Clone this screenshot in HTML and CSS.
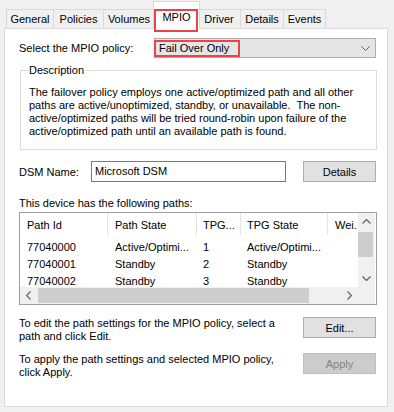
FILE: index.html
```html
<!DOCTYPE html>
<html lang="en">
<head>
    <meta charset="UTF-8">
    <title>MPIO Properties</title>
    <link rel="stylesheet" href="styles.css">
</head>
<body>
    <!-- tab strip -->
    <div class="tabs">
        <div class="tab t-general">General</div>
        <div class="tab t-policies">Policies</div>
        <div class="tab t-volumes">Volumes</div>
        <div class="tab t-mpio active"><span class="mark-tab"></span>MPIO</div>
        <div class="tab t-driver">Driver</div>
        <div class="tab t-details">Details</div>
        <div class="tab t-events">Events</div>
    </div>

    <div class="panel">
        <div class="policy-row">
            <span class="policy-label">Select the MPIO policy:</span>
            <div class="combo">
                <span class="mark">Fail Over Only</span>
                <svg class="combo-arrow" width="9" height="5" viewBox="0 0 9 5">
                    <polyline points="0.5,0.5 4.5,4.5 8.5,0.5" fill="none" stroke="#606060" stroke-width="1"/>
                </svg>
            </div>
        </div>

        <fieldset class="desc">
            <legend>Description</legend>
            <p>The failover policy employs one active/optimized path and all other<br>
            paths are active/unoptimized, standby, or unavailable.&nbsp; The non-<br>
            active/optimized paths will be tried round-robin upon failure of the<br>
            active/optimized path until an available path is found.</p>
        </fieldset>

        <div class="dsm-row">
            <span class="dsm-label">DSM Name:</span>
            <div class="field">Microsoft DSM</div>
            <button class="btn">Details</button>
        </div>

        <div class="paths-label">This device has the following paths:</div>

        <div class="list">
            <div class="list-body">
                <div class="row head">
                    <div class="th">Path Id</div>
                    <div class="th">Path State</div>
                    <div class="th c3">TPG...</div>
                    <div class="th c4">TPG State</div>
                    <div class="th last">Wei.</div>
                </div>
                <div class="row">
                    <div>77040000</div><div>Active/Optimi...</div><div class="c3">1</div><div class="c4">Active/Optimi...</div><div></div>
                </div>
                <div class="row">
                    <div>77040001</div><div>Standby</div><div class="c3">2</div><div class="c4">Standby</div><div></div>
                </div>
                <div class="row">
                    <div>77040002</div><div>Standby</div><div class="c3">3</div><div class="c4">Standby</div><div></div>
                </div>
            </div>
            <div class="vscroll">
                <div class="arrow">
                    <svg width="9" height="5" viewBox="0 0 9 5"><polyline points="0.5,4.5 4.5,0.5 8.5,4.5" fill="none" stroke="#606060" stroke-width="1.2"/></svg>
                </div>
                <div class="vthumb"></div>
                <div class="arrow down">
                    <svg width="9" height="5" viewBox="0 0 9 5"><polyline points="0.5,0.5 4.5,4.5 8.5,0.5" fill="none" stroke="#606060" stroke-width="1.2"/></svg>
                </div>
            </div>
            <div class="hscroll">
                <div class="arrow">
                    <svg width="5" height="9" viewBox="0 0 5 9"><polyline points="4.5,0.5 0.5,4.5 4.5,8.5" fill="none" stroke="#606060" stroke-width="1.2"/></svg>
                </div>
                <div class="hthumb"></div>
                <div class="arrow right">
                    <svg width="5" height="9" viewBox="0 0 5 9"><polyline points="0.5,0.5 4.5,4.5 0.5,8.5" fill="none" stroke="#606060" stroke-width="1.2"/></svg>
                </div>
            </div>
            <div class="corner"></div>
        </div>

        <div class="action-row">
            <p>To edit the path settings for the MPIO policy, select a<br>path and click Edit.</p>
            <button class="btn">Edit...</button>
        </div>

        <div class="action-row apply-row">
            <p>To apply the path settings and selected MPIO policy,<br>click Apply.</p>
            <button class="btn" disabled>Apply</button>
        </div>
    </div>
</body>
</html>
```

FILE: styles.css
```css
body {
    margin: 0;
    background: #f0f0f0;
    font-family: "Liberation Sans", Arial, sans-serif;
    font-size: 11px;
    color: #000;
}

/* tabs */
.tabs {
    display: flex;
    align-items: flex-end;
    height: 28px;
    padding-left: 6px;
}

.tab {
    box-sizing: border-box;
    height: 19px;
    border: 1px solid #d9d9d9;
    border-bottom: none;
    margin-right: -1px;
    padding-top: 3px;
    line-height: 13px;
    text-align: center;
}
.t-general { width: 48px; }
.t-policies { width: 51px; }
.t-volumes { width: 52px; }
.t-driver { width: 44px; }
.t-details { width: 44px; }
.t-events { width: 43px; }

.tab.active {
    position: relative;
    z-index: 2;
    width: 47px;
    height: 28px;
    margin: 0 -3px -1px -1px;
    padding-top: 9px;
    background: #fff;
}

.mark-tab {
    position: absolute;
    left: 0;
    top: 7px;
    width: 44px;
    height: 23px;
    box-sizing: border-box;
    border: 2px solid #e9434b;
}

/* main page */
.panel {
    box-sizing: border-box;
    width: 384px;
    height: 379px;
    margin-left: 4px;
    padding: 9px 10px 0 14px;
    background: #fff;
    border: 1px solid #d9d9d9;
}

.policy-row {
    display: flex;
    align-items: center;
    height: 20px;
}
.policy-label { width: 135px; }

.combo {
    display: flex;
    align-items: center;
    box-sizing: border-box;
    width: 222px;
    height: 20px;
    border: 1px solid #adadad;
    background: #e5e5e5;
}
.mark {
    box-sizing: border-box;
    width: 86px;
    height: 17px;
    margin-left: -1px;
    padding-left: 3px;
    line-height: 13px;
    border: 2px solid #e9434b;
}
.combo-arrow {
    margin-left: auto;
    margin-right: 5px;
}

.desc {
    box-sizing: border-box;
    height: 86px;
    margin: 6px 0 0 1px;
    padding: 0 7px;
    border: 1px solid #dcdcdc;
}
.desc legend {
    padding: 0 1px;
    line-height: 13px;
}
.desc p {
    margin: 9px 0 0;
    padding-left: 1px;
    line-height: 13px;
    white-space: nowrap;
}

.dsm-row {
    display: flex;
    align-items: center;
    height: 21px;
    margin-top: 11px;
}
.dsm-label { width: 72px; }
.field {
    box-sizing: border-box;
    width: 195px;
    height: 21px;
    padding-left: 3px;
    line-height: 19px;
    border: 1px solid #7a7a7a;
}

.btn {
    box-sizing: border-box;
    width: 73px;
    height: 21px;
    margin-left: auto;
    margin-right: 1px;
    padding: 0;
    font: inherit;
    color: #000;
    background: #e1e1e1;
    border: 1px solid #adadad;
}
.btn:disabled {
    color: #838383;
    background: #cccccc;
    border-color: #bfbfbf;
}

.paths-label {
    margin-top: 15px;
    line-height: 13px;
}

/* list view */
.list {
    display: grid;
    grid-template-columns: 338px 17px;
    grid-template-rows: 74px 17px;
    height: 93px;
    margin-top: 2px;
    border: 1px solid #a0a0a0;
    box-sizing: border-box;
}
.list-body { overflow: hidden; }

.row {
    display: grid;
    grid-template-columns: 88px 89px 44px 87px 1fr;
    height: 17px;
    line-height: 17px;
    white-space: nowrap;
}
.row > div { padding-left: 7px; overflow: hidden; }
.row > .c3, .row > .c4 { padding-left: 6px; }

.row.head {
    height: 22px;
    margin-bottom: 4px;
    line-height: 13px;
}
.row.head .th {
    padding-top: 6px;
    border-right: 1px solid #e5e5e5;
}
.row.head .th.last { border-right: none; }

.vscroll {
    display: flex;
    flex-direction: column;
    background: #f0f0f0;
}
.hscroll {
    display: flex;
    background: #f0f0f0;
}
.corner { background: #f0f0f0; }

.arrow {
    display: flex;
    align-items: center;
    justify-content: center;
    width: 17px;
    height: 17px;
    flex: none;
}
.arrow.down { margin-top: auto; }
.arrow.right { margin-left: auto; }

.vthumb {
    height: 25px;
    margin: 2px 2px 0 0;
    background: #cdcdcd;
}
.hthumb {
    width: 271px;
    height: 15px;
    margin: 1px 0 0 1px;
    background: #cdcdcd;
}

.action-row {
    display: flex;
    align-items: flex-start;
    margin-top: 12px;
}
.action-row p {
    margin: 0;
    line-height: 13px;
    white-space: nowrap;
}
.apply-row { margin-top: 10px; }
```
